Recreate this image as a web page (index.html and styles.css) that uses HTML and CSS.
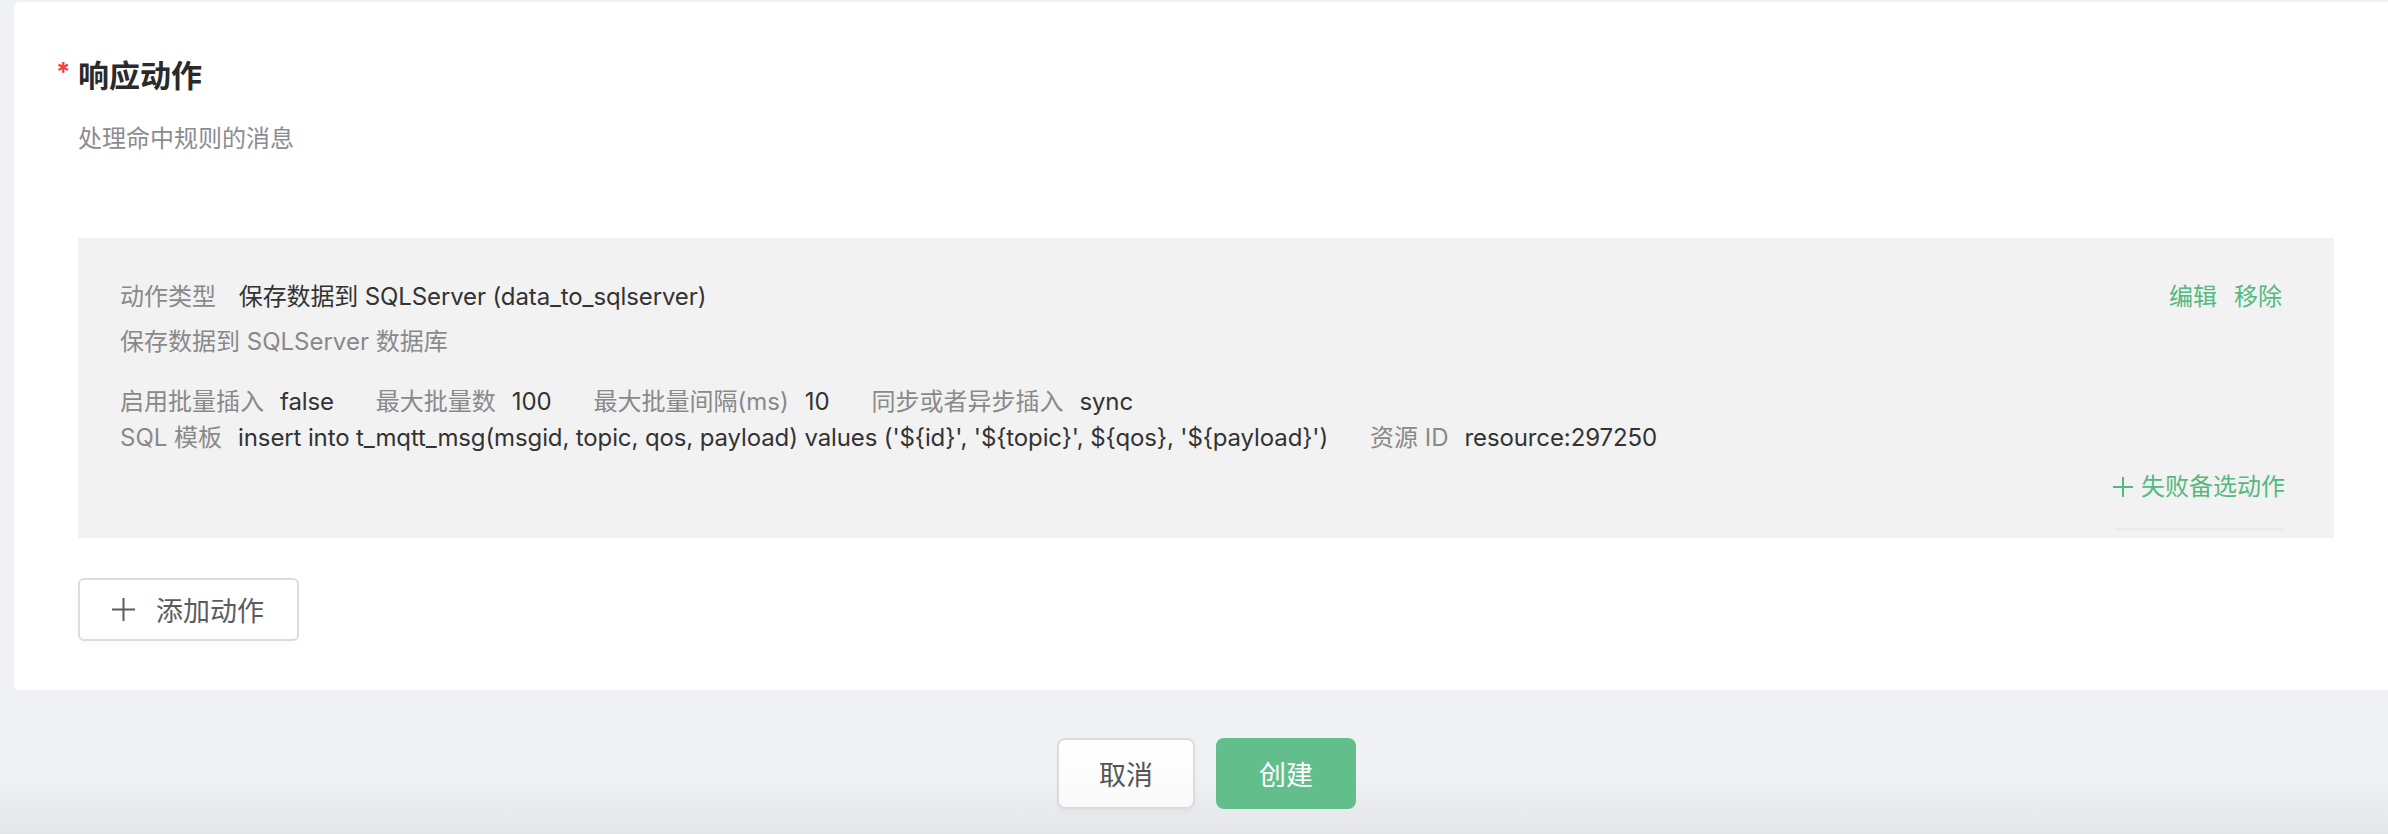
FILE: index.html
```html
<!DOCTYPE html>
<html lang="zh-CN">
<head>
  <meta charset="UTF-8">
  <meta name="viewport" content="width=2388, initial-scale=1.0">
  <title>响应动作</title>
  <link rel="stylesheet" href="styles.css">
</head>
<body>
  <div class="card">
    <h2 class="section-title"><span class="required">*</span>响应动作</h2>
    <p class="section-desc">处理命中规则的消息</p>

    <div class="action-item">
      <div class="action-head">
        <div class="field">
          <span class="label">动作类型</span>
          <span class="value">保存数据到 SQLServer (data_to_sqlserver)</span>
        </div>
        <div class="action-links">
          <a class="link">编辑</a>
          <a class="link">移除</a>
        </div>
      </div>
      <p class="action-desc">保存数据到 SQLServer 数据库</p>

      <div class="params">
        <div class="param-line">
          <span class="pair"><span class="label">启用批量插入</span><span class="value">false</span></span>
          <span class="pair"><span class="label">最大批量数</span><span class="value">100</span></span>
          <span class="pair"><span class="label">最大批量间隔(ms)</span><span class="value">10</span></span>
          <span class="pair"><span class="label">同步或者异步插入</span><span class="value">sync</span></span>
        </div>
        <div class="param-line">
          <span class="pair"><span class="label">SQL 模板</span><span class="value">insert into t_mqtt_msg(msgid, topic, qos, payload) values ('${id}', '${topic}', ${qos}, '${payload}')</span></span>
          <span class="pair"><span class="label">资源 ID</span><span class="value">resource:297250</span></span>
        </div>
      </div>

      <div class="action-foot">
        <button class="fallback-btn">
          <svg class="plus" width="20" height="20" viewBox="0 0 20 20"><path d="M10 0V20M0 10H20" stroke="currentColor" stroke-width="2" fill="none"/></svg>
          失败备选动作
        </button>
      </div>
    </div>

    <button class="add-btn">
      <svg class="plus" width="23" height="23" viewBox="0 0 23 23"><path d="M11.5 0V23M0 11.5H23" stroke="currentColor" stroke-width="2" fill="none"/></svg>
      添加动作
    </button>
  </div>

  <div class="form-footer">
    <button class="btn btn-cancel">取消</button>
    <button class="btn btn-primary">创建</button>
  </div>
</body>
</html>
```

FILE: styles.css
```css
* {
  margin: 0;
  padding: 0;
  box-sizing: border-box;
}

body {
  width: 2388px;
  height: 834px;
  overflow: hidden;
  padding: 2px 0 0 14px;
  background: linear-gradient(#f0f1f5 0, #f0f1f5 775px, #e5e6e9 834px);
  font-family: Inter, "Noto Sans CJK SC", sans-serif;
  font-size: 24px;
  color: #333;
}

button {
  font-family: inherit;
  border: none;
  background: none;
  cursor: pointer;
}

.card {
  background: #fff;
  border-radius: 6px 0 0 6px;
  padding: 52px 54px 49px 64px;
  display: flex;
  flex-direction: column;
}

.section-title {
  font-size: 31px;
  font-weight: 700;
  line-height: 44px;
  color: #2a2a2a;
}

.section-title .required {
  display: inline-block;
  width: 22px;
  margin-left: -22px;
  color: #ee4343;
  font-size: 26px;
  font-weight: 700;
  vertical-align: top;
  line-height: 36px;
}

.section-desc {
  margin-top: 23px;
  line-height: 36px;
  color: #8c8c91;
}

.action-item {
  margin-top: 81px;
  background: #f2f2f2;
  padding: 41px 52px 10px 42px;
  display: flex;
  flex-direction: column;
  line-height: 36px;
}

.action-head {
  display: flex;
  justify-content: space-between;
}

.label {
  color: #898989;
  margin-right: 16px;
}

.value {
  color: #333;
  letter-spacing: -0.12px;
}

.action-links {
  display: flex;
  gap: 17px;
}

.link {
  color: #55b880;
}

.action-desc {
  margin-top: 9px;
  color: #898989;
}

.params {
  margin-top: 24px;
}

.param-line {
  display: flex;
}

.pair {
  margin-right: 42px;
}

.action-foot {
  display: flex;
  justify-content: flex-end;
  margin-right: -5px;
}

.fallback-btn {
  display: flex;
  align-items: center;
  gap: 8px;
  padding: 13px 2px 23px 2px;
  font-size: 24px;
  line-height: 36px;
  color: #55b880;
  background: #f2f2f2;
  border-radius: 6px;
  box-shadow: 0 4px 3px -2px rgba(0, 0, 0, 0.04);
}

.add-btn {
  margin-top: 40px;
  align-self: flex-start;
  display: flex;
  align-items: center;
  gap: 21px;
  width: 221px;
  height: 63px;
  padding-left: 32px;
  border: 2px solid #dcdcdc;
  border-radius: 6px;
  background: #fff;
  box-shadow: 0 4px 4px rgba(0, 0, 0, 0.02);
  font-size: 27px;
  color: #5c5c5c;
}

.form-footer {
  margin-top: 48px;
  padding-left: 11px;
  display: flex;
  justify-content: center;
  gap: 21px;
}

.btn {
  height: 71px;
  border-radius: 8px;
  font-size: 27px;
}

.btn-cancel {
  width: 138px;
  border: 2px solid #dcdcdc;
  background: linear-gradient(#fff, #f9f9f9);
  color: #555;
  box-shadow: 0 3px 4px rgba(0, 0, 0, 0.04);
}

.btn-primary {
  width: 140px;
  background: #62bf8b;
  color: #fff;
}
```
